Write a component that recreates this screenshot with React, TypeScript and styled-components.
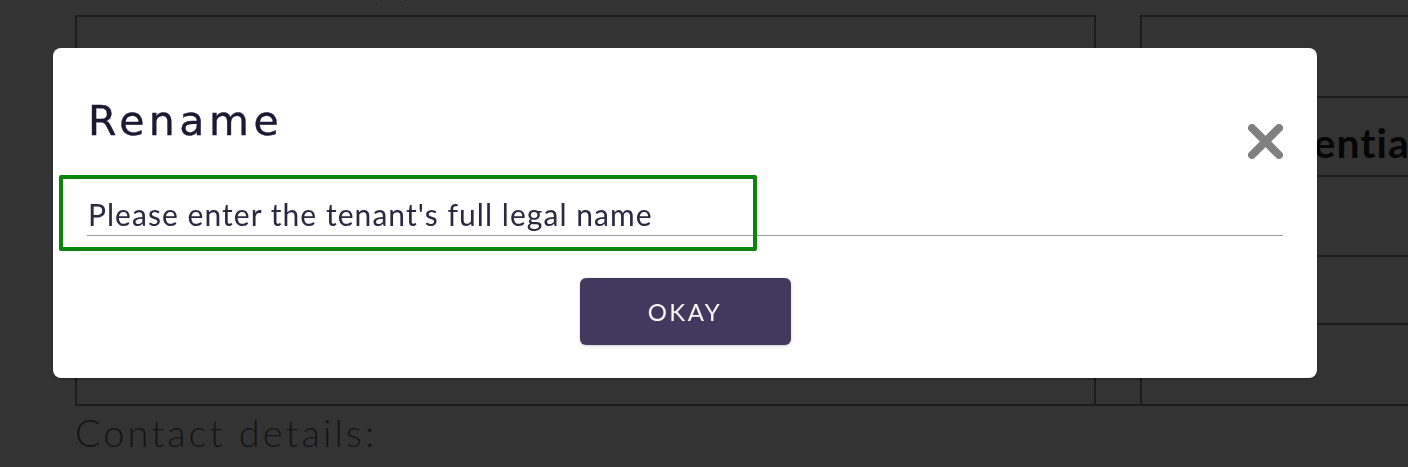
import styled, { createGlobalStyle } from 'styled-components'

const GlobalStyle = createGlobalStyle`
  html, body {
    margin: 0;
    padding: 0;
    background: #ffffff;
    overflow: hidden;
  }
  body {
    font-family: Lato, "Liberation Sans", sans-serif;
  }
`

const Page = styled.div`
  width: 1408px;
  height: 467px;
  overflow: hidden;
  padding-left: 75px;
  box-sizing: border-box;
`

const FieldLabel = styled.div<{ $top: number }>`
  font-size: 38px;
  line-height: 1;
  height: 38px;
  font-weight: 300;
  letter-spacing: 3px;
  color: #6a6a6a;
  white-space: nowrap;
  margin-top: ${p => p.$top}px;
`

const FormRow = styled.div`
  display: flex;
  gap: 44px;
  height: 389px;
  margin-top: 15px;
  border-bottom: 2px solid #8a8a8a;
  width: 1500px;
`

const NameBox = styled.div`
  width: 1021px;
  flex: none;
  box-sizing: border-box;
  border: 2px solid #8a8a8a;
  border-bottom: none;
`

const TypeBox = styled.div`
  flex: 1;
  box-sizing: border-box;
  border: 2px solid #8a8a8a;
  border-bottom: none;
  padding-top: 79px;
  display: flex;
  flex-direction: column;
`

const TypeRow = styled.div<{ $h: number }>`
  height: ${p => p.$h}px;
  box-sizing: border-box;
  border-top: 2px solid #8a8a8a;
  display: flex;
  align-items: center;
  padding: 12px 0 0 68px;
  font-size: 41px;
  font-weight: 700;
  letter-spacing: 1px;
  color: #222;
`

const ContactBox = styled.div`
  margin-top: 16px;
  width: 1500px;
  height: 60px;
  border: 2px solid #8a8a8a;
`

const Overlay = styled.div`
  position: fixed;
  inset: 0;
  background: rgba(0, 0, 0, 0.8);
`

const Modal = styled.div`
  position: absolute;
  left: 53px;
  top: 48px;
  width: 1264px;
  height: 330px;
  box-sizing: border-box;
  background: #ffffff;
  border-radius: 8px;
  box-shadow: 0 1px 3px rgba(0, 0, 0, 0.35);
  padding: 46px 34px 0;
  display: flex;
  flex-direction: column;
`

const Header = styled.div`
  display: flex;
  justify-content: space-between;
  align-items: flex-start;
  height: 50px;
`

const Title = styled.h2`
  margin: 2px 0 0 1px;
  font-family: "DejaVu Sans", Lato, sans-serif;
  font-size: 41px;
  line-height: 50px;
  font-weight: 400;
  letter-spacing: 4.5px;
  color: #1c1932;
  -webkit-text-stroke: 0.4px #1c1932;
`

const CloseButton = styled.button`
  margin-top: 30px;
  width: 35px;
  height: 35px;
  padding: 0;
  border: none;
  background: transparent;
  cursor: pointer;
  display: flex;
`

const NameInput = styled.input`
  margin-top: 48px;
  height: 44px;
  box-sizing: border-box;
  border: none;
  border-bottom: 1.5px solid #9a9a9a;
  outline: none;
  padding: 0 0 0 1px;
  font-family: Lato, "Liberation Sans", sans-serif;
  font-size: 30px;
  line-height: 36px;
  letter-spacing: 1.05px;
  color: #2b2940;
  background: transparent;
`

const OkayButton = styled.button`
  align-self: center;
  margin-top: 42px;
  width: 211px;
  height: 67px;
  border: none;
  border-radius: 6px;
  background: #423a5e;
  color: #f7f7f7;
  font-family: Lato, "Liberation Sans", sans-serif;
  font-size: 24px;
  letter-spacing: 2.5px;
  padding: 0;
  box-shadow: 0 1px 3px rgba(0, 0, 0, 0.2);
  cursor: pointer;
`

const Highlight = styled.div`
  position: absolute;
  left: 6px;
  top: 127px;
  width: 698px;
  height: 76px;
  box-sizing: border-box;
  border: 4.5px solid #0a840a;
  border-radius: 2px;
  pointer-events: none;
`

export default function App() {
  return (
    <>
      <GlobalStyle />
      <Page>
        <FieldLabel $top={-38}>Name of tenant(s)</FieldLabel>
        <FormRow>
          <NameBox />
          <TypeBox>
            <TypeRow $h={79}>Residential</TypeRow>
            <TypeRow $h={80} />
            <TypeRow $h={68} />
            <TypeRow $h={79} />
          </TypeBox>
        </FormRow>
        <FieldLabel $top={7}>Contact details:</FieldLabel>
        <ContactBox />
      </Page>
      <Overlay>
        <Modal>
          <Header>
            <Title>Rename</Title>
            <CloseButton aria-label="Close">
              <svg width="35" height="35" viewBox="0 0 35 35">
                <path
                  d="M4 4 L31 31 M31 4 L4 31"
                  stroke="#808080"
                  strokeWidth="8"
                  strokeLinecap="round"
                  fill="none"
                />
              </svg>
            </CloseButton>
          </Header>
          <NameInput defaultValue="Please enter the tenant's full legal name" />
          <OkayButton>OKAY</OkayButton>
          <Highlight />
        </Modal>
      </Overlay>
    </>
  )
}
